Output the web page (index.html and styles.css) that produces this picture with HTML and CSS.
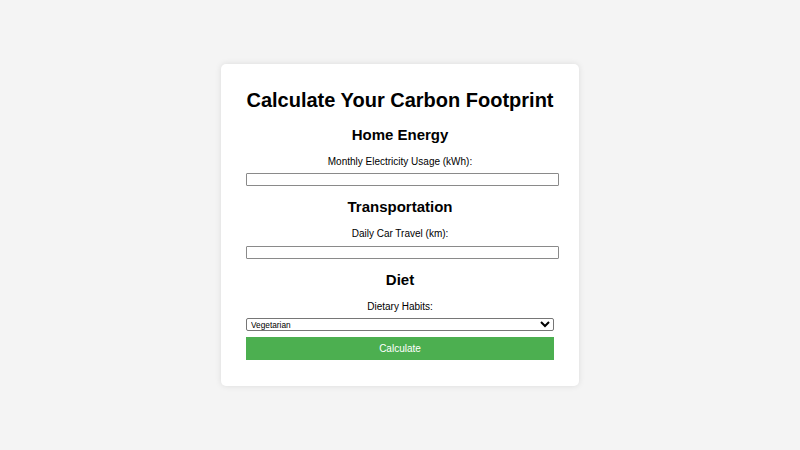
FILE: index.html
```html
<!DOCTYPE html>
<html lang="en">
<head>
<meta charset="utf-8">
<title>Carbon Footprint Calculator</title>
<link rel="stylesheet" href="styles.css">
</head>
<body>
<div class="card">
  <h1 class="title">Calculate Your Carbon Footprint</h1>
  <form class="form">
    <h2 class="section">Home Energy</h2>
    <label class="label" for="electricity">Monthly Electricity Usage (kWh):</label>
    <input class="field" type="number" id="electricity">
    <h2 class="section">Transportation</h2>
    <label class="label" for="car">Daily Car Travel (km):</label>
    <input class="field" type="number" id="car">
    <h2 class="section">Diet</h2>
    <label class="label" for="diet">Dietary Habits:</label>
    <select class="select" id="diet">
      <option>Vegetarian</option>
      <option>Vegan</option>
      <option>Omnivore</option>
    </select>
    <button class="button" type="button">Calculate</button>
  </form>
</div>
</body>
</html>
```

FILE: styles.css
```css
html, body {
  margin: 0;
  padding: 0;
}
body {
  background: #f4f4f4;
  font-family: "Liberation Sans", Arial, sans-serif;
  font-size: 10px;
  color: #000;
  height: 100vh;
  display: flex;
  justify-content: center;
  align-items: center;
}
.card {
  background: #fff;
  width: 308px;
  padding: 25px 25px 25.5px;
  border-radius: 5px;
  box-shadow: 0 0 6px rgba(0, 0, 0, 0.1);
  text-align: center;
}
.title {
  font-size: 20px;
  margin: 0 0 13.5px;
  line-height: 23px;
}
.form {
  display: flex;
  flex-direction: column;
}
.section {
  font-size: 15px;
  line-height: 17px;
  margin: 12px 0;
}
.title + .form .section:first-child {
  margin-top: 0;
}
.label {
  display: block;
  line-height: 11.5px;
  padding-top: 1px;
  margin-bottom: 6px;
}
.field {
  box-sizing: content-box;
  width: 100%;
  height: 11px;
  padding: 0 1.5px;
  margin: 0;
  border: 1px solid #8a8a8a;
  border-radius: 1px;
  font-family: inherit;
  font-size: 8px;
}
.select {
  width: 100%;
  height: 12.5px;
  padding: 0;
  margin: 0 0 6.5px;
  border: 1px solid #767676;
  border-radius: 2px;
  background: #fff;
  font-family: "Liberation Sans", Arial, sans-serif;
  font-size: 8.3px;
  color: #000;
}
.button {
  width: 100%;
  background: #4caf50;
  color: #fff;
  border: none;
  padding: 5.75px;
  font-family: inherit;
  font-size: 10px;
  line-height: 11.5px;
  cursor: pointer;
}
```
